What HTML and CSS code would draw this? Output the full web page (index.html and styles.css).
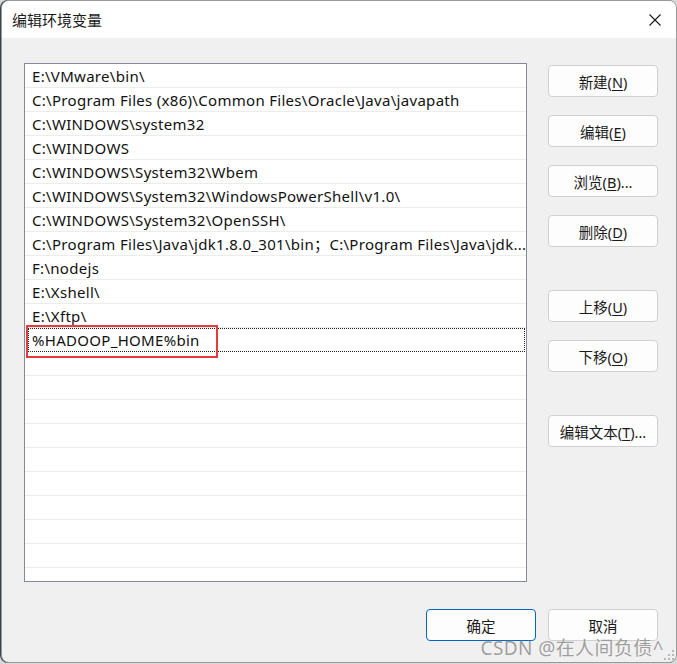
FILE: index.html
```html
<!DOCTYPE html>
<html lang="zh-CN">
  <head>
    <meta charset="UTF-8" />
    <title>编辑环境变量</title>
    <link rel="stylesheet" href="styles.css">
  </head>
  <body>
    <div class="window">
      <div class="title-bar">
        <span class="title">编辑环境变量</span>
        <svg class="close" width="12" height="12" viewBox="0 0 12 12">
          <path d="M0.5 0.5 L11.5 11.5 M11.5 0.5 L0.5 11.5" stroke="#1a1a1a" stroke-width="1.1" fill="none" />
        </svg>
      </div>

      <div class="content">
        <div class="main-row">
          <!-- 路径列表 -->
          <div class="path-list">
            <div class="row">E:\VMware\bin\</div>
            <div class="row">C:\Program Files (x86)\Common Files\Oracle\Java\javapath</div>
            <div class="row">C:\WINDOWS\system32</div>
            <div class="row">C:\WINDOWS</div>
            <div class="row">C:\WINDOWS\System32\Wbem</div>
            <div class="row">C:\WINDOWS\System32\WindowsPowerShell\v1.0\</div>
            <div class="row">C:\WINDOWS\System32\OpenSSH\</div>
            <div class="row">C:\Program Files\Java\jdk1.8.0_301\bin；C:\Program Files\Java\jdk...</div>
            <div class="row">F:\nodejs</div>
            <div class="row">E:\Xshell\</div>
            <div class="row">E:\Xftp\</div>
            <div class="row selected">%HADOOP_HOME%bin</div>
            <div class="row"></div>
            <div class="row"></div>
            <div class="row"></div>
            <div class="row"></div>
            <div class="row"></div>
            <div class="row"></div>
            <div class="row"></div>
            <div class="row"></div>
            <div class="row"></div>
            <div class="row"></div>
            <div class="highlight"></div>
          </div>

          <!-- 操作按钮 -->
          <div class="side-buttons">
            <button class="btn">新建(<u>N</u>)</button>
            <button class="btn">编辑(<u>E</u>)</button>
            <button class="btn">浏览(<u>B</u>)...</button>
            <button class="btn">删除(<u>D</u>)</button>
            <button class="btn group-start">上移(<u>U</u>)</button>
            <button class="btn">下移(<u>O</u>)</button>
            <button class="btn group-start">编辑文本(<u>T</u>)...</button>
          </div>
        </div>

        <div class="footer">
          <button class="btn btn-primary">确定</button>
          <button class="btn">取消</button>
        </div>
      </div>

      <div class="watermark">CSDN @在人间负债^</div>
      <svg class="grip" width="12" height="12" viewBox="0 0 12 12">
        <rect x="9" y="1" width="2" height="2" fill="#b8b8b8" />
        <rect x="5" y="5" width="2" height="2" fill="#b8b8b8" />
        <rect x="9" y="5" width="2" height="2" fill="#b8b8b8" />
        <rect x="1" y="9" width="2" height="2" fill="#b8b8b8" />
        <rect x="5" y="9" width="2" height="2" fill="#b8b8b8" />
        <rect x="9" y="9" width="2" height="2" fill="#b8b8b8" />
      </svg>
    </div>
  </body>
</html>
```

FILE: styles.css
```css
/* 基本样式 */
body {
  margin: 0;
  padding: 0;
  background: #d9d9d9;
  font-family: "Noto Sans", "Noto Sans CJK SC", sans-serif;
  color: #1a1a1a;
  overflow: hidden;
}

.window {
  position: relative;
  margin-left: 1px;
  width: 674px;
  height: 661px;
  background: #f0f0f0;
  border: 1px solid #9a9a9a;
  border-radius: 8px;
  overflow: hidden;
  box-shadow: -1px 0 0 #3c4150;
}

/* 标题栏 */
.title-bar {
  height: 37px;
  background: #ffffff;
  display: flex;
  align-items: center;
  justify-content: space-between;
  padding: 0 15px 0 10px;
}

.title {
  font-family: "Noto Sans CJK SC", sans-serif;
  font-size: 15px;
}

.close {
  margin-top: 1px;
}

/* 内容区 */
.content {
  padding: 25px 18px 0 22px;
}

.main-row {
  display: flex;
  gap: 21px;
}

.path-list {
  position: relative;
  width: 502px;
  height: 517px;
  background: #ffffff;
  border: 1px solid #868a94;
  overflow: hidden;
}

.row {
  height: 23px;
  border-bottom: 1px solid #ececec;
  padding: 0 4px 0 7px;
  font-size: 15px;
  letter-spacing: 0.3px;
  line-height: 24px;
  color: #111111;
  white-space: nowrap;
  overflow: hidden;
}

.row.selected {
  margin: 0 1px 0 3px;
  padding-left: 3px;
  height: 22px;
  line-height: 23px;
  border: 1px dotted #222222;
}

.highlight {
  position: absolute;
  left: 1px;
  top: 261px;
  width: 188px;
  height: 29px;
  border: 2px solid #e43c3c;
}

/* 按钮 */
.side-buttons {
  display: flex;
  flex-direction: column;
  gap: 18px;
  padding-top: 2px;
}

.btn {
  width: 110px;
  height: 32px;
  background: #fdfdfd;
  border: 1px solid #d0d0d0;
  border-radius: 4px;
  font-family: "Noto Sans", "Noto Sans CJK SC", sans-serif;
  font-size: 14.5px;
  color: #1a1a1a;
  padding: 0;
  cursor: pointer;
}

.btn u {
  text-underline-offset: 2px;
}

.btn.group-start {
  margin-top: 25px;
}

.footer {
  display: flex;
  justify-content: flex-end;
  gap: 12px;
  margin-top: 27px;
}

.btn-primary {
  border-color: #0067c0;
}

/* 水印 */
.watermark {
  position: absolute;
  right: 12px;
  bottom: 3px;
  font-family: "Noto Sans", "Noto Sans CJK SC", sans-serif;
  font-size: 19px;
  letter-spacing: 0.4px;
  line-height: 22px;
  color: rgba(125, 125, 125, 0.75);
  text-shadow: 0 0 1px #ffffff;
}

.grip {
  position: absolute;
  right: 1px;
  bottom: 1px;
}
```
